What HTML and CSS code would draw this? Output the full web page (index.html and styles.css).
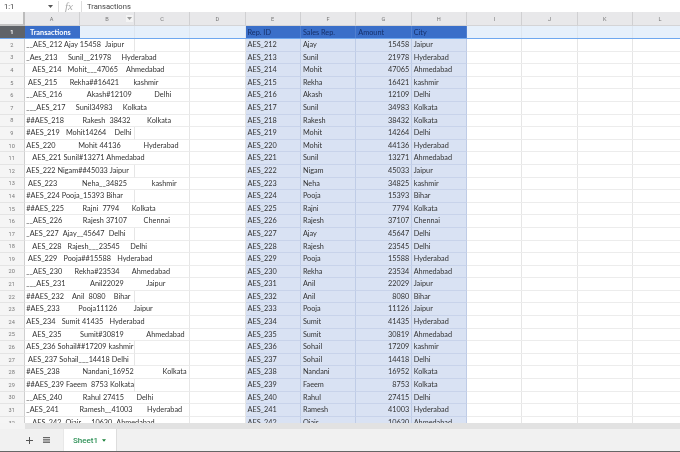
FILE: index.html
```html
<!DOCTYPE html>
<html lang="en">
<head>
<meta charset="utf-8">
<title>Sheet1</title>
<link rel="stylesheet" href="styles.css">
</head>
<body>
<div class="app">
  <div class="formula">
    <div class="namebox">1:1</div>
    <svg class="caret" width="5" height="3" viewBox="0 0 5 3"><path d="M0 0h5L2.5 3z" fill="#555"/></svg>
    <div class="fsep"></div>
    <div class="fx">fx</div>
    <div class="fsep"></div>
    <div class="fval">Transactions</div>
  </div>
  <div class="row heads">
    <div class="corner"></div>
    <div class="ch">A</div>
    <div class="ch chf">B<span class="fbtn"><svg width="5" height="3" viewBox="0 0 5 3"><path d="M0 0h5L2.5 3z" fill="#999"/></svg></span></div>
    <div class="ch">C</div><div class="ch">D</div><div class="ch">E</div><div class="ch">F</div><div class="ch">G</div><div class="ch">H</div><div class="ch">I</div><div class="ch">J</div><div class="ch">K</div><div class="ch">L</div>
  </div>
  <div class="sheet">
    <div class="row first">
      <div class="rh rh1">1</div><div class="title">Transactions</div><div class="lb"></div><div class="lb"></div><div class="lb"></div>
      <div class="th">Rep. ID</div><div class="th">Sales Rep.</div><div class="th">Amount</div><div class="th">City</div>
      <div class="lb"></div><div class="lb"></div><div class="lb"></div><div class="lb"></div>
    </div>
    <div class="row"><div class="rh">2</div><div class="raw s2">__AES_212 Ajay 15458  Jaipur</div><div class="e"></div><div class="e"></div><div class="t">AES_212</div><div class="t">Ajay</div><div class="t n">15458</div><div class="t">Jaipur</div><div class="rest"></div></div>
    <div class="row"><div class="rh">3</div><div class="raw s3">_Aes_213     Sunil__21978     Hyderabad</div><div class="e"></div><div class="t">AES_213</div><div class="t">Sunil</div><div class="t n">21978</div><div class="t">Hyderabad</div><div class="rest"></div></div>
    <div class="row"><div class="rh">4</div><div class="raw s3">   AES_214   Mohit___47065    Ahmedabad</div><div class="e"></div><div class="t">AES_214</div><div class="t">Mohit</div><div class="t n">47065</div><div class="t">Ahmedabad</div><div class="rest"></div></div>
    <div class="row"><div class="rh">5</div><div class="raw s3"> AES_215      Rekha##16421       kashmir</div><div class="e"></div><div class="t">AES_215</div><div class="t">Rekha</div><div class="t n">16421</div><div class="t">kashmir</div><div class="rest"></div></div>
    <div class="row"><div class="rh">6</div><div class="raw s3">__AES_216            Akash#12109           Delhi</div><div class="e"></div><div class="t">AES_216</div><div class="t">Akash</div><div class="t n">12109</div><div class="t">Delhi</div><div class="rest"></div></div>
    <div class="row"><div class="rh">7</div><div class="raw s3">___AES_217     Sunil34983     Kolkata</div><div class="e"></div><div class="t">AES_217</div><div class="t">Sunil</div><div class="t n">34983</div><div class="t">Kolkata</div><div class="rest"></div></div>
    <div class="row"><div class="rh">8</div><div class="raw s3">##AES_218         Rakesh  38432        Kolkata</div><div class="e"></div><div class="t">AES_218</div><div class="t">Rakesh</div><div class="t n">38432</div><div class="t">Kolkata</div><div class="rest"></div></div>
    <div class="row"><div class="rh">9</div><div class="raw s2">#AES_219   Mohit14264    Delhi</div><div class="e"></div><div class="e"></div><div class="t">AES_219</div><div class="t">Mohit</div><div class="t n">14264</div><div class="t">Delhi</div><div class="rest"></div></div>
    <div class="row"><div class="rh">10</div><div class="raw s3">AES_220           Mohit 44136           Hyderabad</div><div class="e"></div><div class="t">AES_220</div><div class="t">Mohit</div><div class="t n">44136</div><div class="t">Hyderabad</div><div class="rest"></div></div>
    <div class="row"><div class="rh">11</div><div class="raw s3">   AES_221 Sunil#13271 Ahmedabad</div><div class="e"></div><div class="t">AES_221</div><div class="t">Sunil</div><div class="t n">13271</div><div class="t">Ahmedabad</div><div class="rest"></div></div>
    <div class="row"><div class="rh">12</div><div class="raw s2">AES_222 Nigam##45033 Jaipur</div><div class="e"></div><div class="e"></div><div class="t">AES_222</div><div class="t">Nigam</div><div class="t n">45033</div><div class="t">Jaipur</div><div class="rest"></div></div>
    <div class="row"><div class="rh">13</div><div class="raw s3"> AES_223            Neha__34825            kashmir</div><div class="e"></div><div class="t">AES_223</div><div class="t">Neha</div><div class="t n">34825</div><div class="t">kashmir</div><div class="rest"></div></div>
    <div class="row"><div class="rh">14</div><div class="raw s2">#AES_224 Pooja_15393 Bihar</div><div class="e"></div><div class="e"></div><div class="t">AES_224</div><div class="t">Pooja</div><div class="t n">15393</div><div class="t">Bihar</div><div class="rest"></div></div>
    <div class="row"><div class="rh">15</div><div class="raw s3">##AES_225         Rajni  7794      Kolkata</div><div class="e"></div><div class="t">AES_225</div><div class="t">Rajni</div><div class="t n">7794</div><div class="t">Kolkata</div><div class="rest"></div></div>
    <div class="row"><div class="rh">16</div><div class="raw s3">__AES_226          Rajesh 37107        Chennai</div><div class="e"></div><div class="t">AES_226</div><div class="t">Rajesh</div><div class="t n">37107</div><div class="t">Chennai</div><div class="rest"></div></div>
    <div class="row"><div class="rh">17</div><div class="raw s2">_AES_227  Ajay__45647  Delhi</div><div class="e"></div><div class="e"></div><div class="t">AES_227</div><div class="t">Ajay</div><div class="t n">45647</div><div class="t">Delhi</div><div class="rest"></div></div>
    <div class="row"><div class="rh">18</div><div class="raw s3">   AES_228   Rajesh___23545     Delhi</div><div class="e"></div><div class="t">AES_228</div><div class="t">Rajesh</div><div class="t n">23545</div><div class="t">Delhi</div><div class="rest"></div></div>
    <div class="row"><div class="rh">19</div><div class="raw s3"> AES_229   Pooja##15588   Hyderabad</div><div class="e"></div><div class="t">AES_229</div><div class="t">Pooja</div><div class="t n">15588</div><div class="t">Hyderabad</div><div class="rest"></div></div>
    <div class="row"><div class="rh">20</div><div class="raw s3">__AES_230      Rekha#23534      Ahmedabad</div><div class="e"></div><div class="t">AES_230</div><div class="t">Rekha</div><div class="t n">23534</div><div class="t">Ahmedabad</div><div class="rest"></div></div>
    <div class="row"><div class="rh">21</div><div class="raw s3">___AES_231            Anil22029           Jaipur</div><div class="e"></div><div class="t">AES_231</div><div class="t">Anil</div><div class="t n">22029</div><div class="t">Jaipur</div><div class="rest"></div></div>
    <div class="row"><div class="rh">22</div><div class="raw s2">##AES_232    Anil  8080    Bihar</div><div class="e"></div><div class="e"></div><div class="t">AES_232</div><div class="t">Anil</div><div class="t n">8080</div><div class="t">Bihar</div><div class="rest"></div></div>
    <div class="row"><div class="rh">23</div><div class="raw s3">#AES_233         Pooja11126        Jaipur</div><div class="e"></div><div class="t">AES_233</div><div class="t">Pooja</div><div class="t n">11126</div><div class="t">Jaipur</div><div class="rest"></div></div>
    <div class="row"><div class="rh">24</div><div class="raw s3">AES_234   Sumit 41435   Hyderabad</div><div class="e"></div><div class="t">AES_234</div><div class="t">Sumit</div><div class="t n">41435</div><div class="t">Hyderabad</div><div class="rest"></div></div>
    <div class="row"><div class="rh">25</div><div class="raw s3">   AES_235         Sumit#30819           Ahmedabad</div><div class="e"></div><div class="t">AES_235</div><div class="t">Sumit</div><div class="t n">30819</div><div class="t">Ahmedabad</div><div class="rest"></div></div>
    <div class="row"><div class="rh">26</div><div class="raw s2">AES_236 Sohail##17209 kashmir</div><div class="e"></div><div class="e"></div><div class="t">AES_236</div><div class="t">Sohail</div><div class="t n">17209</div><div class="t">kashmir</div><div class="rest"></div></div>
    <div class="row"><div class="rh">27</div><div class="raw s2"> AES_237 Sohail___14418 Delhi</div><div class="e"></div><div class="e"></div><div class="t">AES_237</div><div class="t">Sohail</div><div class="t n">14418</div><div class="t">Delhi</div><div class="rest"></div></div>
    <div class="row"><div class="rh">28</div><div class="raw s3">#AES_238           Nandani_16952              Kolkata</div><div class="e"></div><div class="t">AES_238</div><div class="t">Nandani</div><div class="t n">16952</div><div class="t">Kolkata</div><div class="rest"></div></div>
    <div class="row"><div class="rh">29</div><div class="raw s2">##AES_239 Faeem  8753 Kolkata</div><div class="e"></div><div class="e"></div><div class="t">AES_239</div><div class="t">Faeem</div><div class="t n">8753</div><div class="t">Kolkata</div><div class="rest"></div></div>
    <div class="row"><div class="rh">30</div><div class="raw s3">__AES_240          Rahul 27415      Delhi</div><div class="e"></div><div class="t">AES_240</div><div class="t">Rahul</div><div class="t n">27415</div><div class="t">Delhi</div><div class="rest"></div></div>
    <div class="row"><div class="rh">31</div><div class="raw s3">_AES_241          Ramesh__41003       Hyderabad</div><div class="e"></div><div class="t">AES_241</div><div class="t">Ramesh</div><div class="t n">41003</div><div class="t">Hyderabad</div><div class="rest"></div></div>
    <div class="row"><div class="rh">32</div><div class="raw s3">   AES_242  Ojair___10630  Ahmedabad</div><div class="e"></div><div class="t">AES_242</div><div class="t">Ojair</div><div class="t n">10630</div><div class="t">Ahmedabad</div><div class="rest"></div></div>
  </div>
  <div class="hscroll"><div class="hcorner"></div><div class="hthumb"></div></div>
  <div class="tabs">
    <svg class="tabicon" width="7" height="7" viewBox="0 0 7 7"><path d="M3.5 0v7M0 3.5h7" stroke="#555" stroke-width="1"/></svg>
    <svg class="tabicon" width="7" height="6" viewBox="0 0 7 6"><path d="M0 .5h7M0 2.3h7M0 4h7M0 5.6h7" stroke="#666" stroke-width="1"/></svg>
    <div class="tab">Sheet1<svg width="4" height="3" viewBox="0 0 5 3"><path d="M0 0h5L2.5 3z" fill="#188038"/></svg></div>
  </div>
</div>
</body>
</html>
```

FILE: styles.css
```css
* { box-sizing: border-box; }
html, body { margin: 0; padding: 0; background: #fff; }
.app {
  width: 680px; height: 452px; display: flex; flex-direction: column; overflow: hidden;
  font-family: "Lato", "Liberation Sans", sans-serif; font-size: 7.3px; color: #333;
  border-bottom: 1px solid #666; filter: blur(.25px);
}
.formula {
  height: 12px; flex: none; display: flex; align-items: center; background: #fff;
  font-family: "Roboto", "Liberation Sans", sans-serif; font-size: 7.6px; color: #444;
}
.namebox { width: 48px; padding-left: 4px; }
.caret { margin-right: 5px; }
.fsep { width: 1px; height: 11px; background: #ddd; }
.fx { width: 22px; padding-left: 6px; font: italic 11px "Liberation Serif", serif; color: #aaa; }
.fval { padding-left: 5px; }
.row {
  display: grid; height: 12.6px; flex: none;
  grid-template-rows: minmax(0, 1fr);
  grid-template-columns: 24.5px repeat(4, 55.25px) repeat(4, 55.4px) repeat(4, 55.3px);
}
.heads { height: 14px; background: #e8e8ea; }
.corner { background: #f3f3f3; border-right: 2px solid #bcbcbc; border-bottom: 2px solid #c4c4c4; }
.ch {
  display: flex; align-items: center; justify-content: center; position: relative;
  font-family: "Roboto", "Liberation Sans", sans-serif; font-size: 5.6px; color: #777;
  border-right: 1px solid #d0d0d2; border-bottom: 1px solid #d4d4d6;
}
.fbtn {
  position: absolute; right: 1px; top: 3px; width: 7px; height: 7px; background: #f4f4f4;
  display: flex; align-items: center; justify-content: center;
}
.sheet { flex: 1; min-height: 0; overflow: hidden; background: #fff; }
.first { height: 13px; border-bottom: 1px solid #6fa8ef; }
.rh {
  display: flex; align-items: center; justify-content: center;
  background: #f5f5f5; color: #777; font-family: "Roboto", "Liberation Sans", sans-serif; font-size: 5.6px;
  border-right: 1px solid #cfcfcf; border-bottom: 1px solid #e4e4e4;
}
.rh1 { background: #5f6368; color: #fff; font-weight: 700; border-color: #5f6368; }
.title {
  background: #3a6fc9; color: #fff; font-weight: 700; padding-left: 5.5px; line-height: 13px;
  white-space: nowrap; border-right: 1px solid #3a6fc9;
}
.lb { background: #e6f0fb; border-right: 1px solid #dde6f0; }
.th {
  background: #3a6fc9; color: #16306a; padding-left: 2px; line-height: 13px; white-space: nowrap;
  border-right: 1px solid #4f7fd0;
}
.raw {
  white-space: pre; padding-left: 1.8px; line-height: 12.8px; word-spacing: .2px;
  border-right: 1px solid #e6e6e6; border-bottom: 1px solid #ececec;
}
.s2 { grid-column: span 2; }
.s3 { grid-column: span 3; }
.e { border-right: 1px solid #e6e6e6; border-bottom: 1px solid #ececec; }
.t {
  background: #d9e2f3; padding: 0 1.5px 0 2px; line-height: 12.8px; white-space: nowrap;
  border-right: 1px solid #bfcce6; border-bottom: 1px solid #c8d3ea;
}
.n { text-align: right; }
.rest {
  grid-column: span 4;
  border-bottom: 1px solid #ececec;
  background: repeating-linear-gradient(to right, transparent 0, transparent 54.3px, #e6e6e6 54.3px, #e6e6e6 55.3px);
}
.hscroll { height: 6px; flex: none; display: flex; background: #e4e4e4; }
.hcorner { width: 25px; background: #f4f4f4; }
.hthumb { flex: 1; background: #e2e2e2; }
.tabs {
  height: 22px; flex: none; display: flex; align-items: center; background: #f1f1f1;
}
.tabicon { margin-left: 26px; }
.tabicon + .tabicon { margin-left: 10px; }
.tab {
  height: 100%; width: 54px; margin-left: 13px; background: #fff; color: #2e9157;
  display: flex; align-items: center; gap: 4px; padding-left: 9px;
  font-family: "Roboto", "Liberation Sans", sans-serif; font-size: 8px; font-weight: 500;
  border-right: 1px solid #ddd; border-left: 1px solid #e8e8e8;
}
```
